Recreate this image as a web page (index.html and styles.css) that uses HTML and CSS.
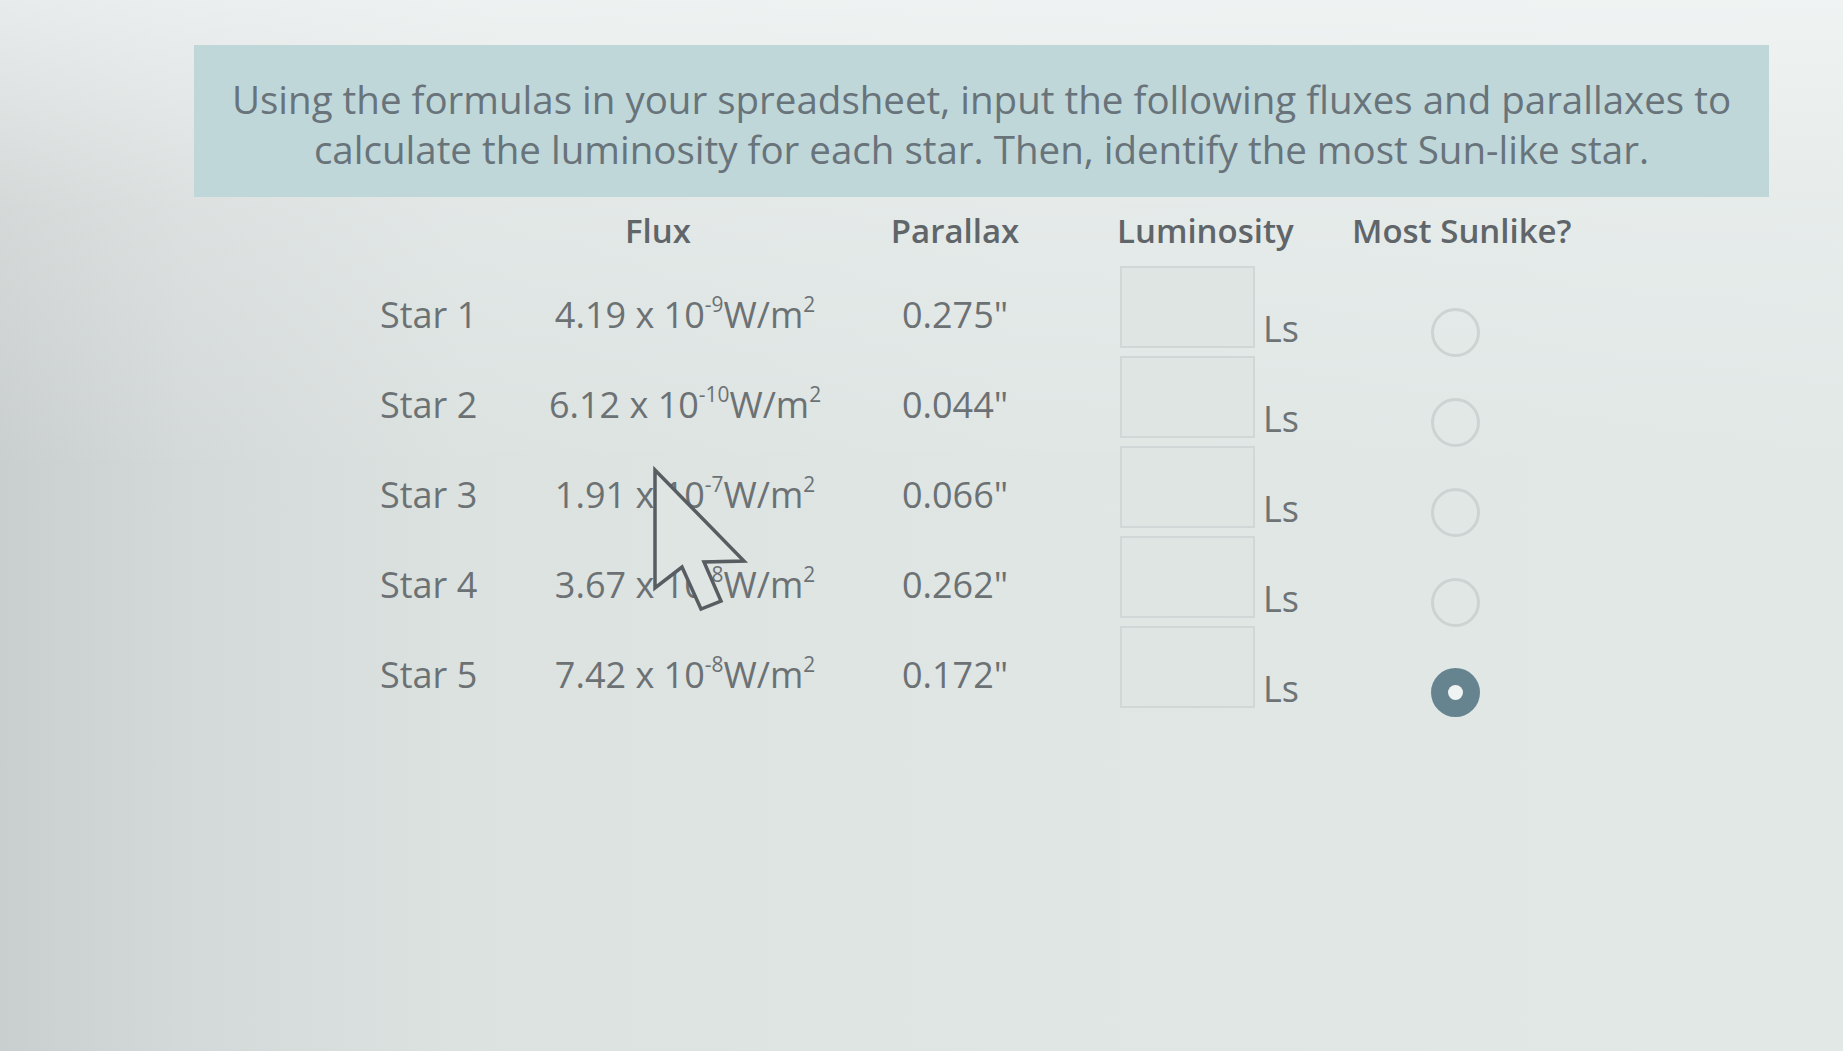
FILE: index.html
```html
<!DOCTYPE html>
<html lang="en">
<head>
<meta charset="utf-8">
<title>Luminosity</title>
<link rel="stylesheet" href="styles.css">
</head>
<body>
<div class="page">
  <div class="banner">
    <p>Using the formulas in your spreadsheet, input the following fluxes and parallaxes to<br>calculate the luminosity for each star. Then, identify the most Sun-like star.</p>
  </div>

  <div class="table">
    <div class="head"></div>
    <div class="head h-flux">Flux</div>
    <div class="head h-par">Parallax</div>
    <div class="head h-lum">Luminosity</div>
    <div class="head h-pick">Most Sunlike?</div>

    <div class="cell label">Star 1</div>
    <div class="cell flux">4.19 x 10<sup>-9</sup>W/m<sup>2</sup></div>
    <div class="cell par">0.275"</div>
    <div class="lum"><span class="box"></span><span class="unit">Ls</span></div>
    <div class="pick"><span class="radio"></span></div>

    <div class="cell label">Star 2</div>
    <div class="cell flux">6.12 x 10<sup>-10</sup>W/m<sup>2</sup></div>
    <div class="cell par">0.044"</div>
    <div class="lum"><span class="box"></span><span class="unit">Ls</span></div>
    <div class="pick"><span class="radio"></span></div>

    <div class="cell label">Star 3</div>
    <div class="cell flux">1.91 x 10<sup>-7</sup>W/m<sup>2</sup></div>
    <div class="cell par">0.066"</div>
    <div class="lum"><span class="box"></span><span class="unit">Ls</span></div>
    <div class="pick"><span class="radio"></span></div>

    <div class="cell label">Star 4</div>
    <div class="cell flux">3.67 x 10<sup>-8</sup>W/m<sup>2</sup></div>
    <div class="cell par">0.262"</div>
    <div class="lum"><span class="box"></span><span class="unit">Ls</span></div>
    <div class="pick"><span class="radio"></span></div>

    <div class="cell label">Star 5</div>
    <div class="cell flux">7.42 x 10<sup>-8</sup>W/m<sup>2</sup></div>
    <div class="cell par">0.172"</div>
    <div class="lum"><span class="box"></span><span class="unit">Ls</span></div>
    <div class="pick"><span class="radio checked"></span></div>
  </div>

  <svg class="cursor" width="100" height="150" viewBox="0 0 100 150" aria-hidden="true">
    <polygon points="4,4 4,122 31,101 50,143 70,135 53,96 93,95" fill="#dfe5e3" stroke="#575d60" stroke-width="3.5" stroke-linejoin="miter"/>
  </svg>
</div>
</body>
</html>
```

FILE: styles.css
```css
html, body {
  margin: 0;
  padding: 0;
}

body {
  width: 1843px;
  height: 1051px;
  overflow: hidden;
  font-family: "Open Sans", "DejaVu Sans", sans-serif;
  background:
    linear-gradient(180deg, rgba(245,247,247,0.7) 0%, rgba(245,247,247,0.25) 20%, rgba(245,247,247,0) 45%),
    linear-gradient(90deg, #c9cfce 0%, #d3d9d8 10%, #dbe2e0 25%, #dfe6e4 55%, #e1e8e6 100%);
}

.page {
  position: relative;
  width: 1843px;
  height: 1051px;
  padding-top: 45px;
  box-sizing: border-box;
}

.banner {
  margin-left: 194px;
  width: 1575px;
  height: 152px;
  background: #c0d7da;
  box-sizing: border-box;
  padding-top: 29px;
  text-align: center;
}

.banner p {
  margin: 0;
  font-size: 38.5px;
  line-height: 50px;
  color: #68737a;
  white-space: nowrap;
}

.table {
  margin-left: 380px;
  margin-top: 10px;
  display: grid;
  grid-template-columns: 120px 370px 170px 300px 240px;
  grid-template-rows: 59px repeat(5, 90px);
}

.head {
  font-size: 33px;
  font-weight: 600;
  line-height: 48px;
  color: #5f6569;
  text-align: center;
}

.h-flux {
  padding-right: 54px;
}

.h-lum {
  text-align: left;
  padding-left: 77px;
}

.h-pick {
  text-align: left;
  padding-left: 12px;
}

.cell {
  font-size: 36px;
  line-height: 40px;
  padding-top: 29px;
  color: #6c7174;
  text-align: center;
  white-space: nowrap;
}

.cell.label {
  text-align: left;
}

.cell sup {
  font-size: 0.58em;
  line-height: 0;
  vertical-align: 0.75em;
}

.lum {
  display: flex;
  align-items: flex-start;
  padding-left: 80px;
}

.box {
  display: block;
  width: 135px;
  height: 82px;
  box-sizing: border-box;
  border: 2px solid #d0d7d6;
  background: #dee5e3;
}

.unit {
  margin-top: 45px;
  margin-left: 8px;
  font-size: 36px;
  line-height: 36px;
  color: #6e7376;
}

.pick {
  padding-left: 91px;
}

.radio {
  display: block;
  margin-top: 42px;
  width: 49px;
  height: 49px;
  box-sizing: border-box;
  border: 3px solid #ccd4d3;
  border-radius: 50%;
}

.radio.checked {
  border: none;
  background: #668490;
  position: relative;
}

.radio.checked::after {
  content: "";
  position: absolute;
  left: 17px;
  top: 17px;
  width: 15px;
  height: 15px;
  border-radius: 50%;
  background: #f0f3f3;
}

.cursor {
  position: absolute;
  left: 651px;
  top: 466px;
}
```
